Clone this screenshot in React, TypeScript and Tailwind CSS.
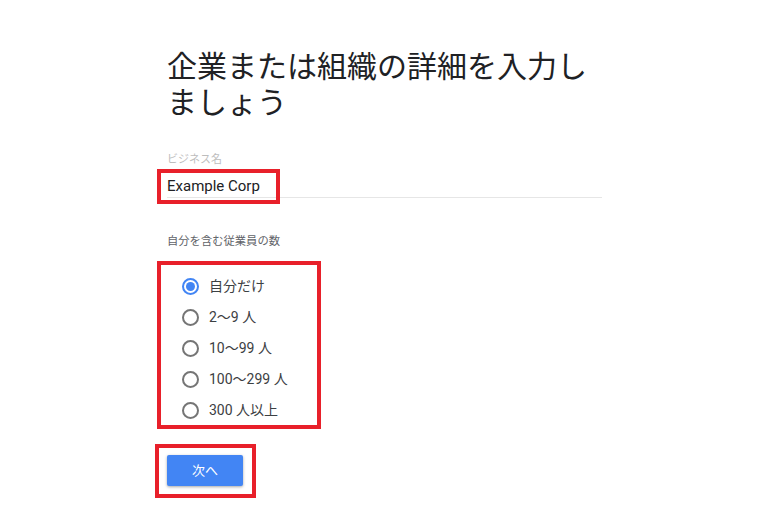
import { useState } from "react";

const sizes = ["自分だけ", "2〜9 人", "10〜99 人", "100〜299 人", "300 人以上"];

function Radio({ checked }: { checked: boolean }) {
  return (
    <span
      className={`flex h-[17px] w-[17px] items-center justify-center rounded-full border-2 ${
        checked ? "border-[#4285f4]" : "border-[#757575]"
      }`}
    >
      {checked && <span className="h-[9px] w-[9px] rounded-full bg-[#4285f4]" />}
    </span>
  );
}

export default function App() {
  const [selected, setSelected] = useState(0);

  return (
    <div
      className="min-h-[524px] w-full bg-white"
      style={{ fontFamily: 'Roboto, "Noto Sans CJK JP", sans-serif' }}
    >
      <div className="ml-[167px] w-[435px] pt-[49px]">
        <h1 className="text-[30px] leading-[36px] font-normal text-[#202124]">
          企業または組織の詳細を入力しましょう
        </h1>

        {/* business name */}
        <div className="relative mt-[32px]">
          <div className="text-[11px] leading-[14px] text-[#bdbdbd]">ビジネス名</div>
          <div className="mt-[9px] border-b border-[#e6e6e6] pb-[1px] text-[15px] leading-[20px] text-[#202124]">
            Example Corp
          </div>
          <div className="absolute top-[16px] left-[-10px] h-[35px] w-[123px] border-4 border-[#e8202a]" />
        </div>

        <div className="mt-[37px] text-[11.3px] leading-[14px] text-[#5f6368]">
          自分を含む従業員の数
        </div>

        {/* employee count */}
        <div className="relative mt-[27px]">
          <div className="flex flex-col gap-[11px] pl-[15px]">
            {sizes.map((s, i) => (
              <button
                key={s}
                type="button"
                onClick={() => setSelected(i)}
                className="flex h-[20px] items-center gap-[10px] text-left text-[14px] text-[#3c4043]"
              >
                <Radio checked={selected === i} />
                <span>{s}</span>
              </button>
            ))}
          </div>
          <div className="absolute top-[-15px] left-[-10px] h-[168px] w-[164px] border-4 border-[#e8202a]" />
        </div>

        {/* next */}
        <div className="relative mt-[35px]">
          <button
            type="button"
            className="h-[31px] w-[76px] rounded-[2px] bg-[#4285f4] text-[13px] text-white shadow-[0_1px_3px_rgba(0,0,0,0.35)]"
          >
            次へ
          </button>
          <div className="absolute top-[-11px] left-[-12px] h-[54px] w-[101px] border-4 border-[#e8202a]" />
        </div>
      </div>
    </div>
  );
}
